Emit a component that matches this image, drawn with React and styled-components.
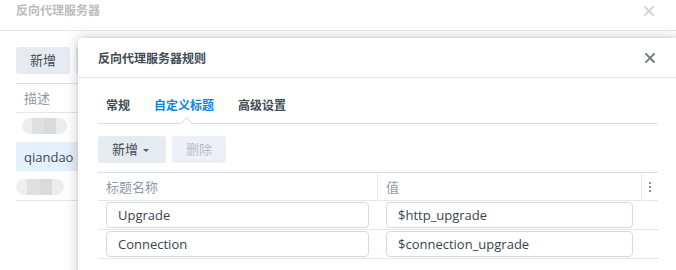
import React from "react"
import styled, { createGlobalStyle } from "styled-components"

const GlobalStyle = createGlobalStyle`
  html, body {
    margin: 0;
    padding: 0;
    background: #fff;
    overflow: hidden;
  }
  body {
    font-family: "Open Sans", "Noto Sans CJK SC", sans-serif;
    font-size: 13px;
    color: #414b55;
  }
`

const Page = styled.div`
  position: relative;
  width: 676px;
  height: 270px;
  overflow: hidden;
  background: #fff;
`

/* background window (inactive) */
const TitleBar = styled.div`
  height: 31px;
  display: flex;
  align-items: flex-start;
  justify-content: space-between;
  padding: 2px 22px 0 16px;
  box-sizing: border-box;
  border-bottom: 1px solid #e8e8e8;
  color: #bcbcbc;
  font-size: 12px;
  font-weight: 700;
  line-height: 18px;
`

const CloseIcon = ({ color = "#6f7780", size = 10 }) => (
  <svg width={size} height={size} viewBox="0 0 10 10">
    <path d="M1 1 L9 9 M9 1 L1 9" stroke={color} strokeWidth="1.8" strokeLinecap="square" />
  </svg>
)

const CloseSlot = styled.div`
  display: flex;
  align-items: center;
  height: 18px;
`

const WindowBody = styled.div`
  padding: 16px 0 0 16px;
`

const Toolbar = styled.div`
  display: flex;
  gap: 6px;
`

const Button = styled.div`
  height: 27px;
  min-width: ${(p) => p.$minWidth || 0}px;
  display: inline-flex;
  align-items: center;
  gap: 5px;
  padding: 0 ${(p) => (p.$caret ? "17px" : "14px")} 0 14px;
  box-sizing: border-box;
  border-radius: 3px;
  background: ${(p) => (p.$disabled ? "#edf1f5" : "#e6ebf1")};
  color: ${(p) => (p.$disabled ? "#b8c0c9" : "#414b55")};
  font-size: 13px;
  line-height: 27px;
`

const Caret = styled.span`
  width: 0;
  height: 0;
  border-left: 3px solid transparent;
  border-right: 3px solid transparent;
  border-top: 3px solid #505a64;
  margin-top: 1px;
`

const List = styled.div`
  margin-top: 9px;
  width: 200px;
  border-top: 1px solid #d9e1e9;
  border-bottom: 1px solid #e3e7eb;
`

const ListHead = styled.div`
  height: 28px;
  line-height: 28px;
  padding-left: 8px;
  color: #8e9aa6;
  border-bottom: 1px solid #e3e7eb;
`

const ListRow = styled.div`
  height: 29px;
  display: flex;
  align-items: center;
  padding-left: ${(p) => (p.$pad === undefined ? 8 : p.$pad)}px;
  background: ${(p) => (p.$selected ? "#e4f0fc" : "transparent")};
`

const Blur = styled.div`
  width: ${(p) => p.$w}px;
  height: 16px;
  border-radius: 8px;
  margin-top: ${(p) => p.$dy || 0}px;
  background: linear-gradient(
    90deg,
    #eeeeef 0 22%,
    #dfe0e2 22% 50%,
    #d9dadc 50% 75%,
    #ececed 75% 100%
  );
  filter: blur(0.6px);
`

/* foreground dialog */
const Dialog = styled.div`
  position: absolute;
  left: 78px;
  top: 38px;
  width: 600px;
  height: 260px;
  background: #fff;
  border-radius: 3px 3px 0 0;
  box-shadow: 0 0 14px rgba(0, 0, 0, 0.22), 0 0 3px rgba(0, 0, 0, 0.08);
`

const DialogHeader = styled.div`
  height: 39px;
  display: flex;
  align-items: center;
  justify-content: space-between;
  padding: 0 23px 0 20px;
  border-bottom: 1px solid #e1e6eb;
  font-size: 12px;
  font-weight: 700;
  color: #414b55;
`

const DialogBody = styled.div`
  padding: 0 20px;
`

const Tabs = styled.div`
  height: 45px;
  display: flex;
  align-items: flex-end;
  gap: 8px;
  border-bottom: 1px solid #d8dfe6;
`

const Tab = styled.div`
  position: relative;
  padding: 0 8px 7px;
  font-size: 12px;
  font-weight: 700;
  line-height: 20px;
  color: ${(p) => (p.$active ? "#0a85e6" : "#414b55")};
`

const Notch = styled.span`
  position: absolute;
  left: 50%;
  bottom: -5px;
  width: 8px;
  height: 8px;
  margin-left: -2px;
  background: #fff;
  border-top: 1px solid #d8dfe6;
  border-left: 1px solid #d8dfe6;
  transform: rotate(45deg);
`

const DialogToolbar = styled(Toolbar)`
  margin-top: 12px;
`

const Grid = styled.div`
  margin-top: 9px;
  display: grid;
  grid-template-columns: 280px 264px 16px;
  border-top: 1px solid #d6dee7;
`

const HeadCell = styled.div`
  height: 28px;
  box-sizing: border-box;
  color: #8e9aa6;
  border-bottom: 1px solid #e3e7eb;
  border-right: ${(p) => (p.$last ? "none" : "1px solid #e8ecef")};
  display: flex;
  align-items: center;
  justify-content: ${(p) => (p.$last ? "center" : "flex-start")};
  padding: ${(p) => (p.$last ? "0" : "0 0 0 8px")};
`

const Cell = styled.div`
  height: 29px;
  box-sizing: border-box;
  padding: 1px 9px 0 8px;
  border-bottom: 1px solid #e3e7eb;
`

const Input = styled.div`
  height: 26px;
  box-sizing: border-box;
  border: 1px solid #d3dbe3;
  border-radius: 4px;
  padding-left: 11px;
  line-height: 24px;
  font-size: 13px;
  color: #3a444e;
  white-space: nowrap;
`

const Kebab = () => (
  <svg width="2" height="10" viewBox="0 0 2 10">
    <rect x="0" y="0" width="2" height="2" fill="#8a9199" />
    <rect x="0" y="4" width="2" height="2" fill="#8a9199" />
    <rect x="0" y="8" width="2" height="2" fill="#8a9199" />
  </svg>
)

const headers = [
  { name: "Upgrade", value: "$http_upgrade" },
  { name: "Connection", value: "$connection_upgrade" },
]

export default function App() {
  return (
    <Page>
      <GlobalStyle />
      <TitleBar>
        <span>反向代理服务器</span>
        <CloseSlot>
          <CloseIcon color="#cfd3d7" />
        </CloseSlot>
      </TitleBar>
      <WindowBody>
        <Toolbar>
          <Button>新增</Button>
          {/* second button sits under the dialog, only its edge shows */}
          <Button $minWidth={54} />
        </Toolbar>
        <List>
          <ListHead>描述</ListHead>
          <ListRow $pad={6}>
            <Blur $w={45} $dy={-4} />
          </ListRow>
          <ListRow $selected>qiandao</ListRow>
          <ListRow $pad={0}>
            <Blur $w={48} $dy={2} />
          </ListRow>
        </List>
      </WindowBody>

      <Dialog>
        <DialogHeader>
          <span>反向代理服务器规则</span>
          <CloseIcon />
        </DialogHeader>
        <DialogBody>
          <Tabs>
            <Tab>常规</Tab>
            <Tab $active>
              自定义标题
              <Notch />
            </Tab>
            <Tab>高级设置</Tab>
          </Tabs>
          <DialogToolbar>
            <Button $caret>
              新增
              <Caret />
            </Button>
            <Button $disabled>删除</Button>
          </DialogToolbar>
          <Grid>
            <HeadCell>标题名称</HeadCell>
            <HeadCell>值</HeadCell>
            <HeadCell $last>
              <Kebab />
            </HeadCell>
            {headers.map((h) => (
              <React.Fragment key={h.name}>
                <Cell>
                  <Input>{h.name}</Input>
                </Cell>
                <Cell>
                  <Input>{h.value}</Input>
                </Cell>
                <Cell />
              </React.Fragment>
            ))}
          </Grid>
        </DialogBody>
      </Dialog>
    </Page>
  )
}
